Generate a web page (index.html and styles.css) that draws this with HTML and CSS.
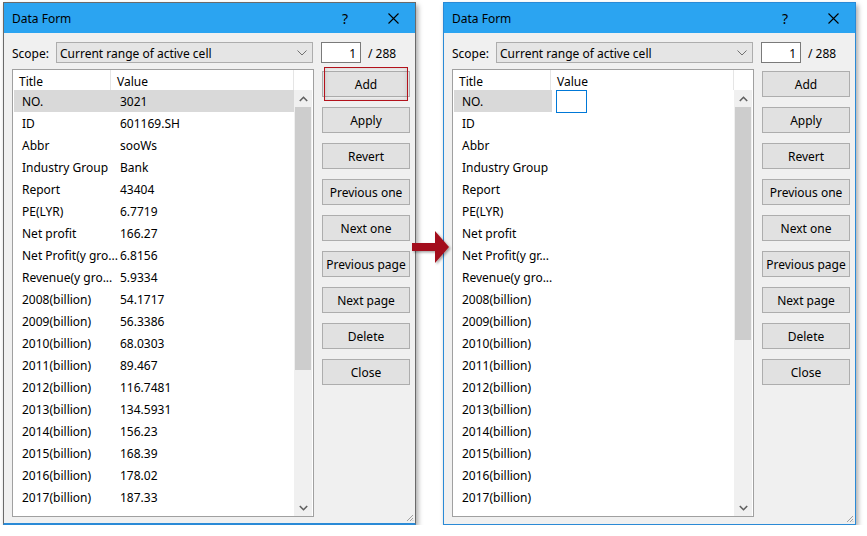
FILE: index.html
```html
<!DOCTYPE html>
<html>
<head>
<meta charset="utf-8">
<link rel="stylesheet" href="styles.css">
</head>
<body>
<div class="stage">
  <div class="window win-left">
    <div class="titlebar">
      <span class="title">Data Form</span>
      <span class="help">?</span>
      <svg class="close" width="11" height="11" viewBox="0 0 11 11"><path d="M0.5 0.5L10.5 10.5M10.5 0.5L0.5 10.5" stroke="#000" stroke-width="1.1" fill="none"/></svg>
    </div>
    <div class="content">
      <div class="scope-row">
        <span class="scope-label">Scope:</span>
        <div class="select"><span>Current range of active cell</span><svg width="10" height="6" viewBox="0 0 10 6"><path d="M0.5 0.5L5 5L9.5 0.5" stroke="#707070" stroke-width="1" fill="none"/></svg></div>
        <div class="num">1</div>
        <span class="total">/ 288</span>
      </div>
      <div class="main">
        <div class="list">
          <div class="lhead"><span class="hc1">Title</span><span class="hc2">Value</span></div>
          <div class="lhead-blank"></div>
          <div class="rows">
            <div class="row selected"><span class="c1">NO.</span><span class="c2">3021</span></div>
            <div class="row"><span class="c1">ID</span><span class="c2">601169.SH</span></div>
            <div class="row"><span class="c1">Abbr</span><span class="c2">sooWs</span></div>
            <div class="row"><span class="c1">Industry Group</span><span class="c2">Bank</span></div>
            <div class="row"><span class="c1">Report</span><span class="c2">43404</span></div>
            <div class="row"><span class="c1">PE(LYR)</span><span class="c2">6.7719</span></div>
            <div class="row"><span class="c1">Net profit</span><span class="c2">166.27</span></div>
            <div class="row"><span class="c1">Net Profit(y gro...</span><span class="c2">6.8156</span></div>
            <div class="row"><span class="c1">Revenue(y gro...</span><span class="c2">5.9334</span></div>
            <div class="row"><span class="c1">2008(billion)</span><span class="c2">54.1717</span></div>
            <div class="row"><span class="c1">2009(billion)</span><span class="c2">56.3386</span></div>
            <div class="row"><span class="c1">2010(billion)</span><span class="c2">68.0303</span></div>
            <div class="row"><span class="c1">2011(billion)</span><span class="c2">89.467</span></div>
            <div class="row"><span class="c1">2012(billion)</span><span class="c2">116.7481</span></div>
            <div class="row"><span class="c1">2013(billion)</span><span class="c2">134.5931</span></div>
            <div class="row"><span class="c1">2014(billion)</span><span class="c2">156.23</span></div>
            <div class="row"><span class="c1">2015(billion)</span><span class="c2">168.39</span></div>
            <div class="row"><span class="c1">2016(billion)</span><span class="c2">178.02</span></div>
            <div class="row"><span class="c1">2017(billion)</span><span class="c2">187.33</span></div>
          </div>
          <div class="scrollbar">
            <div class="sb-btn"><svg width="9" height="6" viewBox="0 0 9 6"><path d="M0.8 5L4.5 1.3L8.2 5" stroke="#606060" stroke-width="1.6" fill="none"/></svg></div>
            <div class="track"><div class="thumb thumb-long"></div></div>
            <div class="sb-btn"><svg width="9" height="6" viewBox="0 0 9 6"><path d="M0.8 1L4.5 4.7L8.2 1" stroke="#606060" stroke-width="1.6" fill="none"/></svg></div>
          </div>
        </div>
        <div class="buttons">
          <div class="btn btn-focus">Add</div>
          <div class="btn">Apply</div>
          <div class="btn">Revert</div>
          <div class="btn">Previous one</div>
          <div class="btn">Next one</div>
          <div class="btn">Previous page</div>
          <div class="btn">Next page</div>
          <div class="btn">Delete</div>
          <div class="btn">Close</div>
        </div>
      </div>
    </div>
    <svg class="grip" width="8" height="8" viewBox="0 0 8 8"><path d="M7 1L1 7M7 4L4 7M7 6.5L6.5 7" stroke="#a0a0a0" stroke-width="1" fill="none"/></svg>
  </div>

  <div class="window win-right">
    <div class="titlebar">
      <span class="title">Data Form</span>
      <span class="help">?</span>
      <svg class="close" width="11" height="11" viewBox="0 0 11 11"><path d="M0.5 0.5L10.5 10.5M10.5 0.5L0.5 10.5" stroke="#000" stroke-width="1.1" fill="none"/></svg>
    </div>
    <div class="content">
      <div class="scope-row">
        <span class="scope-label">Scope:</span>
        <div class="select"><span>Current range of active cell</span><svg width="10" height="6" viewBox="0 0 10 6"><path d="M0.5 0.5L5 5L9.5 0.5" stroke="#707070" stroke-width="1" fill="none"/></svg></div>
        <div class="num">1</div>
        <span class="total">/ 288</span>
      </div>
      <div class="main">
        <div class="list">
          <div class="lhead"><span class="hc1">Title</span><span class="hc2">Value</span></div>
          <div class="lhead-blank"></div>
          <div class="rows">
            <div class="row"><span class="c1 sel-cell">NO.</span><span class="c2 edit-cell"><span class="editbox"></span></span></div>
            <div class="row"><span class="c1">ID</span><span class="c2"></span></div>
            <div class="row"><span class="c1">Abbr</span><span class="c2"></span></div>
            <div class="row"><span class="c1">Industry Group</span><span class="c2"></span></div>
            <div class="row"><span class="c1">Report</span><span class="c2"></span></div>
            <div class="row"><span class="c1">PE(LYR)</span><span class="c2"></span></div>
            <div class="row"><span class="c1">Net profit</span><span class="c2"></span></div>
            <div class="row"><span class="c1">Net Profit(y gr...</span><span class="c2"></span></div>
            <div class="row"><span class="c1">Revenue(y gro...</span><span class="c2"></span></div>
            <div class="row"><span class="c1">2008(billion)</span><span class="c2"></span></div>
            <div class="row"><span class="c1">2009(billion)</span><span class="c2"></span></div>
            <div class="row"><span class="c1">2010(billion)</span><span class="c2"></span></div>
            <div class="row"><span class="c1">2011(billion)</span><span class="c2"></span></div>
            <div class="row"><span class="c1">2012(billion)</span><span class="c2"></span></div>
            <div class="row"><span class="c1">2013(billion)</span><span class="c2"></span></div>
            <div class="row"><span class="c1">2014(billion)</span><span class="c2"></span></div>
            <div class="row"><span class="c1">2015(billion)</span><span class="c2"></span></div>
            <div class="row"><span class="c1">2016(billion)</span><span class="c2"></span></div>
            <div class="row"><span class="c1">2017(billion)</span><span class="c2"></span></div>
          </div>
          <div class="scrollbar">
            <div class="sb-btn"><svg width="9" height="6" viewBox="0 0 9 6"><path d="M0.8 5L4.5 1.3L8.2 5" stroke="#606060" stroke-width="1.6" fill="none"/></svg></div>
            <div class="track"><div class="thumb thumb-short"></div></div>
            <div class="sb-btn"><svg width="9" height="6" viewBox="0 0 9 6"><path d="M0.8 1L4.5 4.7L8.2 1" stroke="#606060" stroke-width="1.6" fill="none"/></svg></div>
          </div>
        </div>
        <div class="buttons">
          <div class="btn">Add</div>
          <div class="btn">Apply</div>
          <div class="btn">Revert</div>
          <div class="btn">Previous one</div>
          <div class="btn">Next one</div>
          <div class="btn">Previous page</div>
          <div class="btn">Next page</div>
          <div class="btn">Delete</div>
          <div class="btn">Close</div>
        </div>
      </div>
    </div>
    <svg class="grip" width="8" height="8" viewBox="0 0 8 8"><path d="M7 1L1 7M7 4L4 7M7 6.5L6.5 7" stroke="#a0a0a0" stroke-width="1" fill="none"/></svg>
  </div>

  <svg class="arrow" width="44" height="40" viewBox="0 0 44 40">
    <defs>
      <filter id="sh" x="-20%" y="-20%" width="150%" height="150%">
        <feDropShadow dx="1.5" dy="1.5" stdDeviation="1.2" flood-color="#000" flood-opacity="0.35"/>
      </filter>
    </defs>
    <polygon points="2,14 25,14 25,2 39,18 25,34 25,22 2,22" fill="#a3101a" filter="url(#sh)"/>
  </svg>
</div>
</body>
</html>
```

FILE: styles.css
```css
html, body {
  margin: 0;
  padding: 0;
  background: #ffffff;
}

body {
  font-family: "Noto Sans", "Open Sans", sans-serif;
  font-size: 12px;
  color: #000;
}

.stage {
  position: relative;
  display: flex;
  gap: 27px;
  padding: 2px 0 0 3px;
}

.window {
  position: relative;
  box-sizing: border-box;
  width: 413px;
  height: 523px;
  background: #f0f0f0;
  border: 1px solid #2a8ad6;
  box-shadow: 2px 3px 5px rgba(0, 0, 0, 0.35);
  display: flex;
  flex-direction: column;
}

.win-left {
  border-left-color: #6a6a6a;
  border-top-color: #6a6a6a;
  border-right-color: #6a6a6a;
  border-bottom: 2px solid #2a8ad6;
}

.titlebar {
  height: 30px;
  background: #2ba4f1;
  display: flex;
  align-items: center;
  padding-left: 8px;
  flex: none;
}

.title {
  flex: 1;
  font-size: 12px;
  line-height: 14px;
  margin-top: 1px;
}

.help {
  font-size: 14px;
  line-height: 14px;
  width: 10px;
  margin-right: 36px;
  margin-top: 1px;
}

.close {
  margin-right: 16px;
  margin-top: 1px;
}

.content {
  padding: 9px 0 0 8px;
  display: flex;
  flex-direction: column;
}

.scope-row {
  display: flex;
  align-items: center;
  height: 21px;
  margin-bottom: 6px;
}

.scope-label {
  width: 44px;
  flex: none;
  padding-top: 2px;
}

.select {
  box-sizing: border-box;
  width: 257px;
  height: 21px;
  background: #e5e5e5;
  border: 1px solid #adadad;
  display: flex;
  align-items: center;
  justify-content: space-between;
  padding: 2px 5px 0 3px;
}

.select svg {
  margin-top: -2px;
}

.num {
  box-sizing: border-box;
  margin-left: 8px;
  width: 40px;
  height: 21px;
  background: #fff;
  border: 1px solid #7a7a7a;
  text-align: right;
  padding-right: 4px;
  line-height: 21px;
}

.total {
  margin-left: 7px;
  padding-top: 2px;
}

.main {
  display: flex;
  gap: 8px;
}

.list {
  box-sizing: border-box;
  width: 302px;
  height: 448px;
  background: #fff;
  border: 1px solid #a0a0a0;
  display: grid;
  grid-template-columns: 281px 18px;
  grid-template-rows: 20px 426px;
  overflow: hidden;
}

.lhead {
  display: flex;
  align-items: flex-start;
  border-right: 1px solid #e5e5e5;
}

.hc1 {
  box-sizing: border-box;
  width: 98px;
  padding-left: 6px;
  padding-top: 3px;
  border-right: 1px solid #e5e5e5;
  height: 20px;
  line-height: 17px;
}

.hc2 {
  padding-left: 6px;
  padding-top: 3px;
  line-height: 17px;
}

.rows {
  overflow: hidden;
}

.row {
  box-sizing: border-box;
  display: flex;
  height: 22px;
  line-height: 21px;
  padding-top: 1px;
  margin-left: 1px;
}

.row.selected {
  background: #d9d9d9;
}

.c1 {
  box-sizing: border-box;
  width: 98px;
  padding-left: 8px;
  white-space: nowrap;
  flex: none;
}

.c2 {
  padding-left: 8px;
  white-space: nowrap;
}

.sel-cell {
  background: #d9d9d9;
  margin-top: -1px;
  padding-top: 1px;
}

.edit-cell {
  padding-left: 4px;
  margin-top: -1px;
}

.editbox {
  display: block;
  box-sizing: border-box;
  width: 31px;
  height: 23px;
  border: 1px solid #0078d7;
  background: #fff;
}

.scrollbar {
  background: #f0f0f0;
  display: flex;
  flex-direction: column;
}

.sb-btn {
  height: 17px;
  flex: none;
  display: flex;
  align-items: center;
  justify-content: center;
}

.track {
  flex: 1;
  padding: 0 1px;
}

.thumb {
  background: #cdcdcd;
}

.thumb-long {
  height: 263px;
}

.thumb-short {
  height: 233px;
}

.buttons {
  display: flex;
  flex-direction: column;
  gap: 10px;
  padding-top: 2px;
}

.btn {
  position: relative;
  box-sizing: border-box;
  width: 88px;
  height: 26px;
  background: #e1e1e1;
  border: 1px solid #adadad;
  text-align: center;
  line-height: 24px;
  padding-top: 1px;
}

.btn-focus::after {
  content: "";
  position: absolute;
  left: 1px;
  right: 1px;
  top: -5px;
  bottom: -5px;
  border: 1px solid #b3121c;
  box-shadow: inset 0 0 4px rgba(0, 0, 0, 0.15);
}

.grip {
  position: absolute;
  right: 1px;
  bottom: 1px;
}

.arrow {
  position: absolute;
  left: 410px;
  top: 229px;
}
```
